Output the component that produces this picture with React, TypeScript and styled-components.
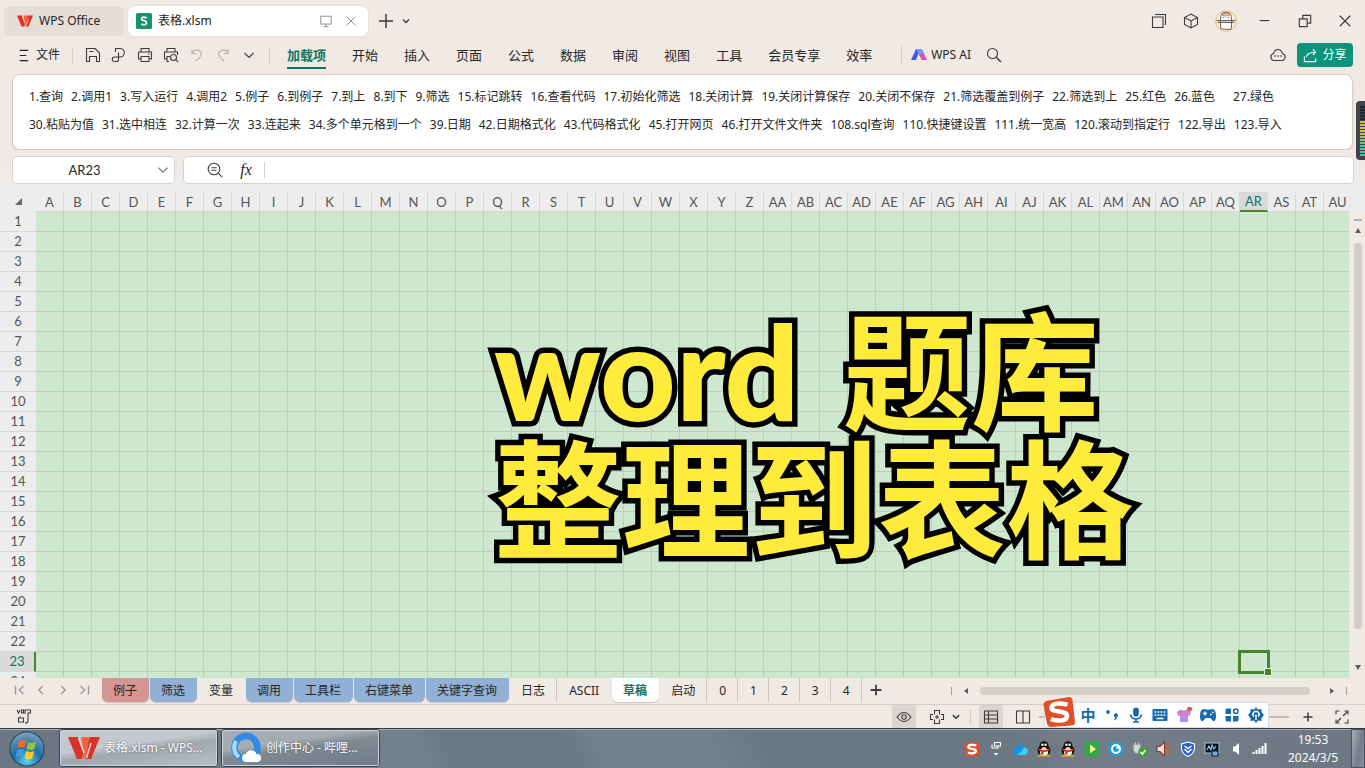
import React from 'react';
import styled, { createGlobalStyle, css } from 'styled-components';

const ui = `"Noto Sans", "Noto Sans CJK SC", sans-serif`;
const geo = `Lato, "Noto Sans CJK SC", sans-serif`;
const chrome = '#f1e9e3';
const teal = '#0e7562';
const green = '#47852c';

const GlobalStyle = createGlobalStyle`
  * { box-sizing: border-box; }
  body { margin: 0; background: ${chrome}; font: 12px/16px ${ui}; color: #262626; }
  button, input { font: inherit; color: inherit; background: none; border: 0; padding: 0; margin: 0; outline: 0; }
  button { cursor: pointer; white-space: nowrap; }
`;

const Page = styled.div`
  position: relative;
  display: flex;
  flex-direction: column;
  height: 100vh;
  overflow: hidden;
`;

const Svg = styled.svg<{ $w?: number }>`
  display: block;
  flex: none;
  width: ${(p) => p.$w ?? 16}px;
  height: ${(p) => p.$w ?? 16}px;
  fill: none;
  stroke: currentColor;
  stroke-width: 1.1;
`;

const Icon = ({ size, box = 16, children }: { size?: number; box?: number; children: React.ReactNode }) => (
  <Svg $w={size ?? box} viewBox={`0 0 ${box} ${box}`} aria-hidden="true">
    {children}
  </Svg>
);

/* ---------- title bar ---------- */
const TitleBar = styled.header`
  display: flex;
  align-items: center;
  height: 41px;
  padding-left: 4px;
  gap: 4px;
  flex: none;
`;
const HomeTab = styled.button`
  display: flex;
  align-items: center;
  gap: 6px;
  width: 120px;
  height: 30px;
  padding-left: 13px;
  border-radius: 6px;
  background: #e6ddd7;
`;
const FileTab = styled.div`
  display: flex;
  align-items: center;
  gap: 6px;
  width: 240px;
  height: 30px;
  padding: 0 8px;
  border-radius: 6px;
  background: #fff;
  box-shadow: 0 0 2px #cfc2ba;
`;
const Grow = styled.div`
  flex: 1;
`;
const IconButton = styled.button<{ $w?: number; $tone?: string; $on?: boolean }>`
  display: flex;
  align-items: center;
  justify-content: center;
  flex: none;
  width: ${(p) => p.$w ?? 26}px;
  height: 24px;
  color: ${(p) => p.$tone ?? '#3c3c3c'};
  background: ${(p) => (p.$on ? '#dbd5d0' : 'none')};
  border-radius: 3px;
`;
const WindowTools = styled.div`
  display: flex;
  align-items: center;
`;

/* ---------- menu bar ---------- */
const MenuBar = styled.nav`
  display: flex;
  align-items: center;
  height: 28px;
  margin-bottom: 5px;
  padding: 0 12px 0 16px;
  flex: none;
`;
const FileMenu = styled.button`
  display: flex;
  align-items: center;
  gap: 5px;
  width: 56px;
`;
const Rule = styled.span<{ $h?: number; $tone?: string }>`
  width: 1px;
  height: ${(p) => p.$h ?? 16}px;
  background: ${(p) => p.$tone ?? '#d5ccc6'};
  flex: none;
`;
const QuickTools = styled.div`
  display: flex;
  margin: 0 7px;
`;
const MenuTabs = styled.div`
  display: flex;
  gap: 26px;
  margin: 0 29px 0 17px;
`;
const MenuTab = styled.button<{ $active?: boolean }>`
  height: 28px;
  padding-top: 2px;
  font-size: 13px;
  border-bottom: 2px solid transparent;
  ${(p) => p.$active && css`
    color: ${teal};
    font-weight: 700;
    border-color: ${teal};
  `}
`;
const AiButton = styled.button`
  display: flex;
  align-items: center;
  gap: 4px;
  margin: 0 10px 0 9px;
`;
const ShareButton = styled.button`
  display: flex;
  align-items: center;
  justify-content: center;
  gap: 4px;
  width: 56px;
  height: 24px;
  margin-left: 6px;
  border-radius: 4px;
  background: #0b937b;
  color: #fff;
`;

/* ---------- add-in ribbon ---------- */
const Ribbon = styled.section`
  margin: 0 12px;
  padding: 8px 16px 10px;
  border: 1px solid #d9cfc9;
  border-radius: 8px;
  background: #fff;
  box-shadow: 0 1px 2px #d9cfc9;
  flex: none;
`;
const RibbonRow = styled.div`
  display: flex;
  align-items: center;
  gap: 8px;
  height: 28px;
`;
const Macro = styled.button<{ $wide?: boolean }>`
  margin-left: ${(p) => (p.$wide ? 10 : 0)}px;
`;

/* ---------- formula bar ---------- */
const FormulaRow = styled.div`
  display: flex;
  gap: 8px;
  padding: 6px 11px 8px 12px;
  background: linear-gradient(${chrome}, #ededed);
  flex: none;
`;
const Field = styled.div<{ $w?: number }>`
  display: flex;
  align-items: center;
  height: 28px;
  border: 1px solid #d9d2cd;
  border-radius: 5px;
  background: #fff;
  ${(p) => (p.$w ? `width: ${p.$w}px; flex: none;` : 'flex: 1; padding-left: 18px;')}
`;
const NameInput = styled.input`
  flex: 1;
  min-width: 0;
  padding-left: 4px;
  text-align: center;
  font: 13px/16px ${geo};
`;
const FormulaInput = styled.input`
  flex: 1;
  padding: 0 8px;
`;
const Fx = styled.button`
  width: 36px;
  font: italic 16px/20px "Liberation Serif", serif;
  text-align: center;
`;

/* ---------- grid ---------- */
const SheetArea = styled.main`
  display: flex;
  flex: 1;
  min-height: 0;
  background: #ededed;
`;
const SheetView = styled.div`
  flex: 1;
  min-width: 0;
  overflow: hidden;
`;
const Table = styled.table`
  width: 1352px;
  table-layout: fixed;
  border-collapse: separate;
  border-spacing: 0;
  font: 13px/19px ${geo};
  color: #555;
`;
const ColHead = styled.th<{ $on?: boolean }>`
  width: 28px;
  height: 20px;
  padding: 0;
  overflow: hidden;
  font-weight: 400;
  border-right: 1px solid #d8d8d8;
  border-bottom: ${(p) => (p.$on ? `2px solid ${green}` : '1px solid #d4d8d4')};
  background: ${(p) => (p.$on ? '#dadada' : '#ededed')};
  color: ${(p) => (p.$on ? teal : '#555')};
  line-height: 18px;
`;
const Corner = styled.th`
  width: 36px;
  padding: 0;
`;
const CornerMark = styled(Svg)`
  margin-left: 15px;
  fill: #666;
  stroke: none;
`;
const RowHead = styled.th<{ $on?: boolean }>`
  height: 20px;
  padding: 0;
  font-weight: 400;
  border-bottom: 1px solid #d8d8d8;
  border-right: ${(p) => (p.$on ? `2px solid ${green}` : '0')};
  background: ${(p) => (p.$on ? '#dadada' : '#ededed')};
  color: ${(p) => (p.$on ? teal : '#555')};
`;
const Cell = styled.td`
  position: relative;
  padding: 0;
  background: #cde8cf;
  border-right: 1px solid #cac7c2;
  border-bottom: 1px solid #cac7c2;
`;
const Selection = styled.div`
  position: absolute;
  z-index: 1;
  inset: -2px -3px -3px -2px;
  border: 3px solid ${green};
  &::after {
    content: '';
    position: absolute;
    right: -4px;
    bottom: -4px;
    width: 6px;
    height: 6px;
    background: ${green};
    box-shadow: 0 0 0 1px #e4f2e5;
  }
`;
const VScroll = styled.div`
  display: flex;
  flex-direction: column;
  align-items: center;
  width: 16px;
  margin-top: 21px;
  padding: 6px 0 7px 2px;
  gap: 6px;
  background: ${chrome};
  color: #5b5b5b;
`;
const Split = styled.span`
  width: 8px;
  height: 2px;
  background: #b8b0aa;
`;
const VThumb = styled.div`
  width: 8px;
  flex: 1;
  margin: 2px 0 28px;
  border-radius: 4px;
  background: #d3cec9;
`;

const Caption = styled.div`
  position: absolute;
  left: 494px;
  top: 306px;
  font: 700 128px/128px Lato, "Noto Sans CJK SC", sans-serif;
  color: #ffeb3b;
  white-space: nowrap;
  -webkit-text-stroke: 11px #000;
  paint-order: stroke fill;
  pointer-events: none;
`;
const Latin = styled.span`
  margin-right: 12px;
  font-weight: 900;
  font-size: 132px;
`;

/* ---------- sheet tabs ---------- */
const SheetBar = styled.div`
  display: flex;
  align-items: flex-start;
  height: 27px;
  border-bottom: 1px solid #d5ccc6;
  background: ${chrome};
  flex: none;
`;
const SheetNav = styled.div`
  display: flex;
  padding-left: 8px;
  width: 102px;
`;
const fills = { red: '#d69492', blue: '#92afd5', active: '#fff', none: 'transparent' };
const SheetTab = styled.button<{ $fill: keyof typeof fills; $line?: boolean }>`
  position: relative;
  height: 24px;
  padding: 2px 11px 0;
  margin-right: 1px;
  border: 0 solid transparent;
  border-right: 1px solid ${(p) => (p.$line ? '#d0c7c1' : 'transparent')};
  border-radius: ${(p) => (p.$line ? 0 : '0 0 6px 6px')};
  background: ${(p) => fills[p.$fill]};
  ${(p) => p.$fill !== 'none' && 'box-shadow: 0 1px 1px #c9c4c6;'}
  ${(p) => p.$fill === 'active' && `color: ${teal}; font-weight: 700;`}
`;
const HScroll = styled.div`
  display: flex;
  align-items: center;
  flex: 0 1 396px;
  height: 25px;
  margin: 0 18px 0 auto;
  gap: 10px;
  color: #5b5b5b;
`;
const HThumb = styled.div`
  flex: 1;
  height: 8px;
  margin-right: 8px;
  border-radius: 4px;
  background: #d3cec6;
`;

/* ---------- status bar ---------- */
const StatusBar = styled.footer`
  display: flex;
  align-items: center;
  height: 23px;
  padding: 0 10px 0 11px;
  background: ${chrome};
  flex: none;
`;
const StatusGap = styled.span`
  width: 8px;
`;
const ZoomSlider = styled.input`
  appearance: none;
  width: 250px;
  height: 2px;
  margin: 0 6px 0 4px;
  background: #c1bab5;
  &::-webkit-slider-thumb {
    appearance: none;
    width: 8px;
    height: 8px;
    border-radius: 4px;
    background: #777;
  }
`;

const Ime = styled.div`
  position: absolute;
  right: 96px;
  bottom: 40px;
  display: flex;
  align-items: center;
  height: 26px;
  gap: 8px;
  padding: 0 4px 0 35px;
  border: 1px solid #d6dde6;
  background: #fff;
  color: #1769ad;
`;
const ImeLogo = styled.div`
  position: absolute;
  left: -2px;
  bottom: -1px;
`;
const ImeText = styled.button`
  width: 16px;
  font: 700 15px/20px ${ui};
`;

const Meter = styled.aside`
  position: absolute;
  right: 0;
  top: 101px;
  width: 9px;
  height: 59px;
  padding: 5px 0 4px 4px;
  border-radius: 4px 0 0 4px;
  background: #3f444d;
`;
const MeterBars = styled.div`
  height: 100%;
  background:
    repeating-linear-gradient(transparent 0 2px, #3f444d 2px 3px),
    linear-gradient(#20242c 0 14px, #c9c05a 15px 28px, #52c0a0 40px);
`;

/* ---------- taskbar ---------- */
const Taskbar = styled.footer`
  display: flex;
  align-items: stretch;
  height: 40px;
  border-top: 1px solid #2d3945;
  box-shadow: inset 0 1px #a8b1b9;
  background: linear-gradient(62deg, #6b7782 0 22%, #74818b 24% 31%, #6c7883 33% 42%, #74808a 44% 52%, #6b7782 56% 74%, #727d87 78%, #6d7883);
  color: #fff;
  flex: none;
`;
const StartButton = styled.button`
  display: flex;
  align-items: center;
  justify-content: center;
  width: 54px;
  margin-right: 5px;
`;
const TaskButton = styled.button<{ $on?: boolean }>`
  display: flex;
  align-items: center;
  gap: 4px;
  width: 159px;
  height: 38px;
  margin-right: 3px;
  padding-left: 8px;
  border: 1px solid #dfe4e8;
  border-radius: 3px;
  outline: 1px solid #36424e;
  outline-offset: -1px;
  box-shadow: inset 0 0 0 1px #cfd5da;
  text-shadow: 0 0 2px #4b5560;
  background: ${(p) =>
    p.$on
      ? 'linear-gradient(172deg, #c3c9ce 0 40%, #a0a8af 55%, #b9c0c5)'
      : 'linear-gradient(172deg, #a5adb4 0 35%, #7f8a93 50%, #6f7c87)'};
`;
const Tray = styled.div`
  display: flex;
  align-items: center;
  gap: 8px;
  margin-left: auto;
  padding-right: 18px;
`;
const Clock = styled.time`
  padding-top: 2px;
  width: 54px;
  margin-right: 11px;
  text-align: center;
  line-height: 18px;
`;
const ShowDesktop = styled.button`
  width: 14px;
  border: 1px solid #48535d;
  background: linear-gradient(100deg, #a5aeb5, #717c86 60%, #8a949c);
`;

/* ---------- drawings ---------- */
const WpsLogo = ({ size }: { size: number }) => (
  <Icon box={32} size={size}>
    <path d="M16 11l3.500 6L15 27H9z" fill="#f4643a" stroke="none" />
    <path d="M0 5h10l5.500 15L13 27H9z" fill="#d8332a" stroke="none" />
    <path d="M13 5h7.500l4 13-2.500 9h-5z" fill="#f4643a" stroke="none" />
    <path d="M21.500 5H32l-9 22h-5z" fill="#d8332a" stroke="none" />
    <path d="M10.500 6l5.500 15M23 11l-4.500 15" stroke="#f8ded6" strokeWidth="1.400" />
  </Icon>
);
const Triangle = ({ d }: { d: string }) => (
  <Icon box={8}>
    <path d={d} fill="currentColor" stroke="none" />
  </Icon>
);
const Penguin = () => (
  <Icon>
    <ellipse cx="8" cy="9.500" rx="6.500" ry="5.500" fill="#111" stroke="none" />
    <ellipse cx="8" cy="5" rx="4.500" ry="4.800" fill="#111" stroke="none" />
    <ellipse cx="8" cy="11" rx="4" ry="4" fill="#fff" stroke="none" />
    <circle cx="6.400" cy="3.800" r="1.200" fill="#fff" stroke="none" />
    <circle cx="9.600" cy="3.800" r="1.200" fill="#fff" stroke="none" />
    <path d="M5.500 6h5l-2.500 1.500z" fill="#f5a81c" stroke="none" />
    <path d="M3 7.500q5 3 10 0l.5 2q-3 1.600-6 1.500v2.500H5V10.800l-2.300-1.200z" fill="#e0302c" stroke="none" />
    <path d="M2.500 15q2.500-2 5 0zM8.500 15q2.500-2 5 0z" fill="#f5a81c" stroke="#f5a81c" />
  </Icon>
);
const SogouMark = ({ size }: { size: number }) => (
  <Icon box={32} size={size}>
    <path d="M3 5L26 1q3 0 3.500 3L32 26q0 3-3 3.500L8 31q-3 0-4-3L.500 9q0-3 2.500-4z" fill="#df5128" stroke="none" />
    <path d="M24.500 8.500Q9 5.500 8.500 12c0 5 16 2 15.500 8-.5 6-12 5-16 3" stroke="#fff" strokeWidth="4.600" />
  </Icon>
);

const cols = Array.from({ length: 47 }, (_, i) =>
  i < 26 ? String.fromCharCode(65 + i) : 'A' + String.fromCharCode(39 + i),
);
const rows = Array.from({ length: 24 }, (_, i) => i + 1);

const macros = [
  ['1.查询', '2.调用1', '3.写入运行', '4.调用2', '5.例子', '6.到例子', '7.到上', '8.到下', '9.筛选', '15.标记跳转', '16.查看代码', '17.初始化筛选', '18.关闭计算', '19.关闭计算保存', '20.关闭不保存', '21.筛选覆盖到例子', '22.筛选到上', '25.红色', '26.蓝色', '27.绿色'],
  ['30.粘贴为值', '31.选中相连', '32.计算一次', '33.连起来', '34.多个单元格到一个', '39.日期', '42.日期格式化', '43.代码格式化', '45.打开网页', '46.打开文件文件夹', '108.sql查询', '110.快捷键设置', '111.统一宽高', '120.滚动到指定行', '122.导出', '123.导入'],
];
const menus = ['加载项', '开始', '插入', '页面', '公式', '数据', '审阅', '视图', '工具', '会员专享', '效率'];
const sheets: [string, keyof typeof fills, boolean?][] = [
  ['例子', 'red'], ['筛选', 'blue'], ['变量', 'none'], ['调用', 'blue'], ['工具栏', 'blue'],
  ['右键菜单', 'blue'], ['关键字查询', 'blue'], ['日志', 'none', true], ['ASCII', 'none'],
  ['草稿', 'active'], ['启动', 'none', true], ['0', 'none', true], ['1', 'none', true],
  ['2', 'none', true], ['3', 'none', true], ['4', 'none', true],
];

const quick: [string, React.ReactNode, string?][] = [
  ['保存', <path d="M1.500 14.500v-13h8.500l4.500 4.500v8.500h-3v-5h-7v5zM4.500 4.500h4" />],
  ['输出为PDF', <path d="M4.500 5V1.500H9a4.200 4.200 0 0 1 0 8.500H7.500V5.500M7.500 10v2.500a2 2 0 0 1-2 2h-2a2.200 2.200 0 0 1 0-4.500h4" />],
  ['打印', <path d="M4 5V1.500h8V5M4 12H1.500V5h13v7H12M4 9.500h8v5H4zM11 7.200h1.500" />],
  ['打印预览', <><path d="M4 5V1.500h8V5M4 12H1.500V5h13v3M6 14.500H4v-5h3" /><circle cx="10.500" cy="10.500" r="3" /><path d="M12.700 12.700l2.500 2.500" /></>],
  ['撤销', <path d="M3 2v4.500h4.500M3 6.500C5 3 8 2.500 10 3.500c3.500 2 3 6-3.500 10.500" />, '#b8b0ab'],
  ['恢复', <path d="M13 2v4.500H8.500M13 6.500C11 3 8 2.500 6 3.500c-3.500 2-3 6 3 10.500" />, '#b8b0ab'],
  ['更多', <path d="M3.500 6L8 10.500 12.500 6" />],
];

export default function App() {
  return (
    <Page>
      <GlobalStyle />
      <TitleBar>
        <HomeTab><WpsLogo size={16} />WPS Office</HomeTab>
        <FileTab>
          <Icon>
            <rect width="16" height="16" rx="1.500" fill="#17946b" stroke="none" />
            <path d="M10.800 5Q8 3.500 6.200 4.500c-1.600 1.800 0 2.800 1.800 3.200 2.500.5 3 2 2 3.300-1 1.100-3.200.8-4.600 0" stroke="#fff" strokeWidth="1.700" />
          </Icon>
          表格.xlsm
          <Grow />
          <IconButton $w={20} $tone="#8d8d8d" aria-label="窗口显示">
            <Icon size={14}><path d="M2 2.500h12v9H2zM8 11.500V14M5 14.500h6" /></Icon>
          </IconButton>
          <IconButton $w={18} $tone="#8d8d8d" aria-label="关闭标签">
            <Icon size={14}><path d="M3 3l10 10M13 3L3 13" /></Icon>
          </IconButton>
        </FileTab>
        <WindowTools>
          <IconButton $w={28} aria-label="新建"><Icon><path d="M8 1v14M1 8h14" strokeWidth="1.500" /></Icon></IconButton>
          <IconButton $w={12} aria-label="标签列表"><Icon size={12}><path d="M4 6l4 4 4-4" strokeWidth="1.800" /></Icon></IconButton>
        </WindowTools>
        <Grow />
        <WindowTools>
          <IconButton $w={32} aria-label="窗口"><Icon><path d="M1.500 4h10.500v10.500H1.500zM4 1.500h10.500V12" /></Icon></IconButton>
          <IconButton $w={32} aria-label="应用"><Icon><path d="M8 1l6.500 3.500v7L8 15l-6.500-3.500v-7zM1.500 4.500L8 8l6.500-3.500M8 8v7" /></Icon></IconButton>
          <IconButton $w={38} aria-label="账户">
            <Icon box={24} size={22}>
              <circle cx="12" cy="12" r="11.200" fill="#f7efe0" stroke="#ecc27b" />
              <path d="M6 10q0-8 6-7.500 6-.5 6 7.500v9q-1 3-3.500 2h-5Q6.500 21 6 19z" fill="#fff" stroke="#7a655b" />
              <path d="M1.500 11.500h21M3 13.500h18" stroke="#66615c" />
              <path d="M8 4.500q4-2.500 8 0l-1 2H9z" fill="#e8c6b2" stroke="#7a655b" strokeWidth=".7" />
              <path d="M9.500 8v1M14.500 8v1" />
            </Icon>
          </IconButton>
          <IconButton $w={40} aria-label="最小化"><Icon size={14}><path d="M2 7.500h11" strokeWidth="1.300" /></Icon></IconButton>
          <IconButton $w={40} aria-label="还原"><Icon size={14}><path d="M1.500 5.500h9v9h-9zM5.500 5.500v-4h9v9h-4" strokeWidth="1.300" /></Icon></IconButton>
          <IconButton $w={40} aria-label="关闭"><Icon size={14}><path d="M2 2l12 12M14 2L2 14" strokeWidth="1.300" /></Icon></IconButton>
        </WindowTools>
      </TitleBar>

      <MenuBar>
        <FileMenu><Icon size={15}><path d="M4 2.500h9M4 8h7M4 13.500h9" strokeWidth="1.300" /></Icon>文件</FileMenu>
        <Rule />
        <QuickTools>
          {quick.map(([label, art, tone]) => (
            <IconButton key={label} $tone={tone} aria-label={label}><Icon>{art}</Icon></IconButton>
          ))}
        </QuickTools>
        <Rule />
        <MenuTabs>
          {menus.map((m, i) => <MenuTab key={m} $active={i === 0}>{m}</MenuTab>)}
        </MenuTabs>
        <Rule $h={20} />
        <AiButton>
          <Icon>
            <path d="M5 2h4.500L5 13H0z" fill="#4a56e8" stroke="none" />
            <path d="M5.500 2H11l2.500 5-5 2z" fill="#6d9cf3" stroke="none" />
            <path d="M8 8l4.500-2L16 13h-5z" fill="#e04fb4" stroke="none" />
          </Icon>
          WPS AI
        </AiButton>
        <IconButton aria-label="搜索"><Icon><circle cx="6.500" cy="6.500" r="5" /><path d="M10 10l5 5" strokeWidth="1.500" /></Icon></IconButton>
        <Grow />
        <IconButton aria-label="云同步">
          <Icon>
            <path d="M4 13.500a3.600 3.600 0 0 1-.5-7C4.500 3.500 6 2.500 8 2.500s3.500 1 4.500 4a3.600 3.600 0 0 1-.5 7z" />
            <path d="M4.500 9h1.300M7.400 9h1.300M10.300 9h1.300" strokeWidth="1.500" />
          </Icon>
        </IconButton>
        <ShareButton><Icon size={15}><path d="M1.500 9v5.500h12V11M3.500 9.500Q5 4.500 13 4.500M10.500 1.500l3 3-3 3" strokeWidth="1.200" /></Icon>分享</ShareButton>
      </MenuBar>

      <Ribbon>
        {macros.map((row, r) => (
          <RibbonRow key={r}>
            {row.map((m) => <Macro key={m} $wide={m === '27.绿色'}>{m}</Macro>)}
          </RibbonRow>
        ))}
      </Ribbon>

      <FormulaRow>
        <Field $w={163}>
          <NameInput aria-label="名称框" defaultValue="AR23" />
          <IconButton $w={22} $tone="#777" aria-label="名称列表"><Icon size={12}><path d="M2 5l6 6 6-6" strokeWidth="1.500" /></Icon></IconButton>
        </Field>
        <Field>
          <IconButton aria-label="缩小查看"><Icon><circle cx="7" cy="7" r="5.800" /><path d="M4.500 5.800h5M4.500 8.200h5M11.200 11.200l4 4" /></Icon></IconButton>
          <Fx aria-label="插入函数">fx</Fx>
          <Rule />
          <FormulaInput aria-label="编辑栏" />
        </Field>
      </FormulaRow>

      <SheetArea>
        <SheetView>
          <Table>
            <thead>
              <tr>
                <Corner aria-label="全选"><CornerMark $w={8} viewBox="0 0 8 8"><path d="M7 0v7H0z" /></CornerMark></Corner>
                {cols.map((c) => <ColHead key={c} $on={c === 'AR'}>{c}</ColHead>)}
              </tr>
            </thead>
            <tbody>
              {rows.map((r) => (
                <tr key={r}>
                  <RowHead $on={r === 23}>{r}</RowHead>
                  {cols.map((c) => <Cell key={c}>{r === 23 && c === 'AR' && <Selection />}</Cell>)}
                </tr>
              ))}
            </tbody>
          </Table>
        </SheetView>
        <VScroll>
          <Split />
          <Triangle d="M4 1l3 5H1z" />
          <VThumb />
          <Triangle d="M4 7l3-5H1z" />
        </VScroll>
      </SheetArea>

      <SheetBar>
        <SheetNav>
          {['M4 3v10M13 3.500L8.500 8l4.500 4.500', 'M10 3.500L5.500 8l4.500 4.500', 'M6 3.500L10.500 8 6 12.500', 'M12 3v10M3 3.500L7.500 8 3 12.500'].map((d, i) => (
            <IconButton key={d} $w={22} $tone="#a09a96" aria-label={['首个', '上一个', '下一个', '最后'][i]}>
              <Icon size={14}><path d={d} strokeWidth="1.700" /></Icon>
            </IconButton>
          ))}
        </SheetNav>
        {sheets.map(([name, fill, line]) => <SheetTab key={name} $fill={fill} $line={line}>{name}</SheetTab>)}
        <IconButton $w={26} aria-label="新建工作表"><Icon size={12}><path d="M8 1v14M1 8h14" strokeWidth="2.400" /></Icon></IconButton>
        <HScroll>
          <Rule $h={8} $tone="#a9a29d" />
          <Triangle d="M2 4l4-3v6z" />
          <HThumb />
          <Triangle d="M6 4L2 1v6z" />
          <Rule $h={8} $tone="#a9a29d" />
        </HScroll>
      </SheetBar>

      <StatusBar>
        <IconButton aria-label="宏"><Icon><path d="M1 1l1.500 3L4 1M5.500 1v3h2v-3zM9 5V1h5.500v3H12v8q0 2-3 2M2.500 13V9h5v4zM4 9V7.500" /></Icon></IconButton>
        <Grow />
        <IconButton $w={24} $on aria-label="阅读模式"><Icon><path d="M1 8q7-9 14 0-7 9-14 0z" /><circle cx="8" cy="8" r="2.200" /></Icon></IconButton>
        <StatusGap />
        <IconButton aria-label="十字定位"><Icon><path d="M5.500 5.500v-4h5v4M5.500 10.500v4h5v-4M4 5.500H1.500v5H4M12 5.500h2.500v5H12M6 8h4M8 6v4" /></Icon></IconButton>
        <IconButton $w={12} aria-label="定位选项"><Icon size={10}><path d="M3 5l5 5 5-5" strokeWidth="2.500" /></Icon></IconButton>
        <StatusGap />
        <Rule />
        <StatusGap />
        <IconButton $w={24} $on aria-label="普通视图"><Icon><path d="M1.500 2h13v12h-13zM1.500 6h13M1.500 10h13M5.500 2v12" /></Icon></IconButton>
        <StatusGap />
        <IconButton $w={24} aria-label="分页预览"><Icon><path d="M1.500 2h13v12h-13zM8 2v12" /></Icon></IconButton>
        <ZoomSlider type="range" aria-label="缩放" defaultValue={50} />
        <IconButton aria-label="放大"><Icon size={12}><path d="M8 2v12M2 8h12" strokeWidth="2" /></Icon></IconButton>
        <StatusGap />
        <IconButton aria-label="全屏"><Icon><path d="M2 5.500V2h3.500M10.500 2H14v3.500M14 10.500V14h-3.500M5.500 14H2v-3.500M9 7l4-4M3 13l4-4" /></Icon></IconButton>
      </StatusBar>

      <Taskbar>
        <StartButton aria-label="开始">
          <Icon box={36}>
            <defs>
              <radialGradient id="orb" cx=".5" cy=".85" r=".9">
                <stop offset="0" stopColor="#5fd0f0" />
                <stop offset=".45" stopColor="#1f6ea8" />
                <stop offset="1" stopColor="#8fa9bd" />
              </radialGradient>
            </defs>
            <circle cx="18" cy="18" r="17" fill="url(#orb)" stroke="#2b4458" />
            <path d="M10 10q4-2 7 0l-1.500 7q-3-1.500-7 0z" fill="#ee6a2c" stroke="none" />
            <path d="M19 11q4 2 8-.5L25.500 18q-4 2-8 0z" fill="#8fc73e" stroke="none" />
            <path d="M8 19q4-2 7 0l-1.500 7q-3-2-7 0z" fill="#3f9be0" stroke="none" />
            <path d="M17 20q4 2 8 0l-1.500 7.500q-4 2-8 0z" fill="#fbc92d" stroke="none" />
          </Icon>
        </StartButton>
        <TaskButton $on><WpsLogo size={32} />表格.xlsm - WPS...</TaskButton>
        <TaskButton>
          <Icon box={32}>
            <circle cx="16" cy="15.500" r="11.500" stroke="#2f8be6" strokeWidth="6.500" />
            <path d="M6 9A12 12 0 0 0 9 25" stroke="#a9dcf8" strokeWidth="4" />
            <path d="M16 30a4 4 0 0 1 0-8 5.500 5.500 0 0 1 10.500 0 4 4 0 0 1 1 8z" fill="#fff" stroke="none" />
          </Icon>
          创作中心 - 哔哩...
        </TaskButton>
        <Tray>
          <SogouMark size={16} />
          <Icon box={16}>
            <path d="M6.500 1.500h6v3.500h-6zM4 3.500v3.500h6V5" />
            <path d="M5.500 12h5L8 14.500z" fill="#fff" stroke="none" />
          </Icon>
          <Icon>
            <path d="M4 14a3.800 3.800 0 0 1 0-7.500A4.500 4.500 0 0 1 12 6a4 4 0 0 1 .5 8z" fill="#1893e6" stroke="none" />
            <path d="M4 14Q10 12 12 6q4 1 4 4.500-.5 3-3.500 3.500z" fill="#3fd0e8" stroke="none" />
          </Icon>
          <Penguin />
          <Penguin />
          <Icon><rect x=".5" y=".5" width="15" height="15" rx="2" fill="#2fa84a" stroke="none" /><path d="M6 3.500l6 4.500-6 4.500z" fill="#f4f77a" stroke="none" /></Icon>
          <Icon><circle cx="8" cy="8" r="7.500" fill="#1d9fe0" stroke="none" /><circle cx="8" cy="8" r="4" stroke="#fff" strokeWidth="2" /><circle cx="10" cy="6.500" r="1.500" fill="#fff" stroke="none" /></Icon>
          <Icon>
            <path d="M2 4h6v5q-1 3-3 3t-3-3zM3.500 1v3M6.500 1v3" fill="#d8d8d8" stroke="#c2c2c2" />
            <circle cx="11" cy="11" r="4.800" fill="#3aa832" stroke="none" /><path d="M8.500 11l2 2 3-4" stroke="#fff" strokeWidth="1.500" />
          </Icon>
          <Icon><path d="M1 5.500h3L8.500 1v14L4 10.500H1z" fill="#f2e3de" stroke="#8f3427" /><path d="M10.500 5q2 3 0 6M12.500 3q3.500 5 0 10" stroke="#d05c3f" strokeWidth="1.400" /></Icon>
          <Icon><path d="M8 1l6.500 2v5q-1 5-6.500 7.500Q2.500 13 1.500 8V3z" fill="#2a62d8" stroke="#fff" /><path d="M4.500 5L8 7.500 11.500 5M4.500 8L8 11.500 11.500 8" stroke="#fff" strokeWidth="1.500" /></Icon>
          <Icon><rect x="1" y="2" width="14" height="10" fill="#0a0f14" stroke="#9bb9d6" /><path d="M3 9l2-4 2 4 1-5 2 4 2-3" stroke="#7fd3ff" /><path d="M8 10h6v5H8z" fill="#7aa5d8" stroke="#123" /></Icon>
          <Icon><path d="M5 5.500h2L11 2v12L7 10.500H5z" fill="#fff" stroke="none" /></Icon>
          <Icon><path d="M1.500 13v-2M4.500 13v-4M7.500 13V7M10.500 13V5M13.500 13V2" stroke="#fff" strokeWidth="2" /></Icon>
        </Tray>
        <Clock>19:53<br />2024/3/5</Clock>
        <ShowDesktop aria-label="显示桌面" />
      </Taskbar>

      <Caption><Latin>word </Latin>题库<br />整理到表格</Caption>
      <Meter><MeterBars /></Meter>

      <Ime>
        <ImeLogo><SogouMark size={32} /></ImeLogo>
        <ImeText>中</ImeText>
        <IconButton $w={16} $tone="#1769ad" aria-label="标点"><Icon><circle cx="4" cy="5" r="1.900" fill="currentColor" stroke="none" /><path d="M10 8.500a2 2 0 1 1 3 1.500q0 2.500-2.500 3.500l-.5-.8q1.300-.8 1.300-2-1.300-.5-1.300-2.200z" fill="currentColor" stroke="none" /></Icon></IconButton>
        <IconButton $w={16} $tone="#1769ad" aria-label="语音"><Icon><rect x="5.200" y=".5" width="5.600" height="9" rx="2.800" fill="currentColor" stroke="none" /><path d="M2.500 7.500q1 4.500 5.500 4.500t5.500-4.500M8 12v3M5 15h6" strokeWidth="1.600" /></Icon></IconButton>
        <IconButton $w={16} $tone="#1769ad" aria-label="软键盘"><Icon><rect x=".5" y="2" width="15" height="12" rx="1" fill="currentColor" stroke="none" /><path d="M2.500 5h11M2.500 8h11" stroke="#fff" strokeWidth="1.500" strokeDasharray="1.800 1.200" /><path d="M4.500 11.500h7" stroke="#fff" strokeWidth="1.500" /></Icon></IconButton>
        <IconButton $w={16} aria-label="皮肤">
          <Icon><path d="M1 5l4-2.500q3 2.500 6 0L15 5l-1.500 4L12 8.500V15H4V8.500L2.500 9z" fill="#b58af0" stroke="none" /><path d="M1 5l4-2.500q3 2.500 6 0L12 8.500H4L2.500 9z" fill="#d87fc0" stroke="none" /><circle cx="13.500" cy="2" r="2.500" fill="#ea5a3c" stroke="none" /></Icon>
        </IconButton>
        <IconButton $w={16} $tone="#1769ad" aria-label="游戏"><Icon><path d="M4 2q4 1.500 8 0 4 0 4 7 0 6-3 5l-2.500-3h-5L3 14q-3 1-3-5 0-7 4-7z" fill="currentColor" stroke="none" /><path d="M3 6.500h4M5 4.500v4M10 7.500h1.500M12 5.500h1.500" stroke="#fff" strokeWidth="1.400" /></Icon></IconButton>
        <IconButton $w={16} $tone="#1769ad" aria-label="工具箱"><Icon><path d="M1.500 3q0-1.500 1.500-1.500h4v5.500h-5.500zM1.500 9H7v5.500H3q-1.500 0-1.500-1.500zM9 9h5.500v4q0 1.500-1.500 1.500H9z" fill="currentColor" stroke="none" /><circle cx="11.800" cy="4.300" r="2.200" strokeWidth="1.500" /></Icon></IconButton>
        <IconButton $w={16} $tone="#1769ad" aria-label="设置"><Icon><path d="M8 0l2 2.500 3.500-.5v3L16 8l-2.500 3v3l-3.500-.5L8 16l-2-2.500-3.500.5v-3L0 8l2.500-3V2l3.500.5z" fill="currentColor" stroke="none" /><path d="M5.800 9.500a3 3 0 1 1 4.400 0M8 7.500V13" stroke="#fff" strokeWidth="1.400" /></Icon></IconButton>
      </Ime>
    </Page>
  );
}
